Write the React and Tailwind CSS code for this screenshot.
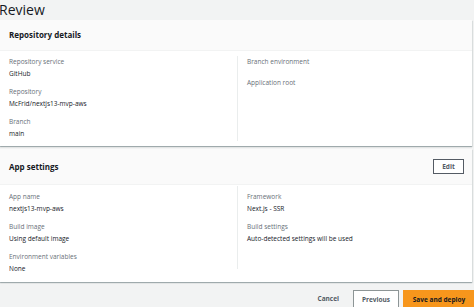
import React from "react";

const Field = ({ label, value, className = "" }) => (
  <div className={className}>
    <div className="h-[12px] text-[6.5px] leading-[12px] text-[#687078]">{label}</div>
    {value !== undefined && (
      <div className="h-[12px] text-[6.5px] leading-[12px] text-[#16191f]">{value}</div>
    )}
  </div>
);

const cardShadow =
  "shadow-[0_1px_1px_0_rgba(0,28,36,0.25),1px_1px_1px_0_rgba(0,28,36,0.06),-1px_1px_1px_0_rgba(0,28,36,0.06)]";

export default function App() {
  return (
    <div className="w-[474px] h-[307px] overflow-hidden bg-[#f2f3f3] font-['Open_Sans',sans-serif]">
      {/* Page title */}
      <h1 className="h-[20px] -ml-[1px] text-[14px] leading-[20px] text-[#16191f]">Review</h1>

      {/* Repository details */}
      <section className={`mr-[2px] bg-white ${cardShadow}`}>
        <div className="h-[31px] flex items-center px-[9px] bg-[#fafafa] border-b border-[#f2f3f3]">
          <h2 className="text-[8px] font-bold text-[#16191f]">Repository details</h2>
        </div>
        <div className="grid grid-cols-[237px_1fr] h-[95px]">
          <div className="pl-[9px] pt-[5px] flex flex-col gap-[6px]">
            <Field label="Repository service" value="GitHub" />
            <Field label="Repository" value="McFrid/nextjs13-mvp-aws" />
            <Field label="Branch" value="main" />
          </div>
          <div className="my-[5px] border-l border-[#eaeded] pl-[9px]">
            <Field label="Branch environment" className="mb-[9px]" />
            <Field label="Application root" />
          </div>
        </div>
      </section>

      {/* App settings */}
      <section className={`mt-[3px] mr-[2px] bg-white ${cardShadow}`}>
        <div className="h-[36px] flex items-center justify-between pl-[9px] pr-[8px] bg-[#fafafa] border-b border-[#f2f3f3]">
          <h2 className="text-[8px] font-bold text-[#16191f]">App settings</h2>
          <button className="w-[31px] h-[15px] border border-[#545b64] bg-white text-[6.5px] font-bold text-[#545b64]">
            Edit
          </button>
        </div>
        <div className="grid grid-cols-[237px_1fr] h-[97px]">
          <div className="pl-[9px] pt-[6px] flex flex-col gap-[6px]">
            <Field label="App name" value="nextjs13-mvp-aws" />
            <Field label="Build image" value="Using default image" />
            <Field label="Environment variables" value="None" />
          </div>
          <div className="mt-[1px] mb-[13px] border-l border-[#eaeded] pl-[9px] pt-[5px] flex flex-col gap-[6px]">
            <Field label="Framework" value="Next.js - SSR" />
            <Field label="Build settings" value="Auto-detected settings will be used" />
          </div>
        </div>
      </section>

      {/* Footer actions */}
      <div className="flex justify-end items-start pt-[8px] text-[6.5px] font-bold">
        <button className="h-[18px] mr-[14px] text-[#545b64]">Cancel</button>
        <button className="h-[20px] w-[46px] mr-[4px] border border-[#8d9596] bg-white text-[#545b64]">
          Previous
        </button>
        <button className="h-[20px] w-[72px] -mr-[1px] bg-[#f7961c] text-[#16191f] border border-[#f7961c]">
          Save and deploy
        </button>
      </div>
    </div>
  );
}
